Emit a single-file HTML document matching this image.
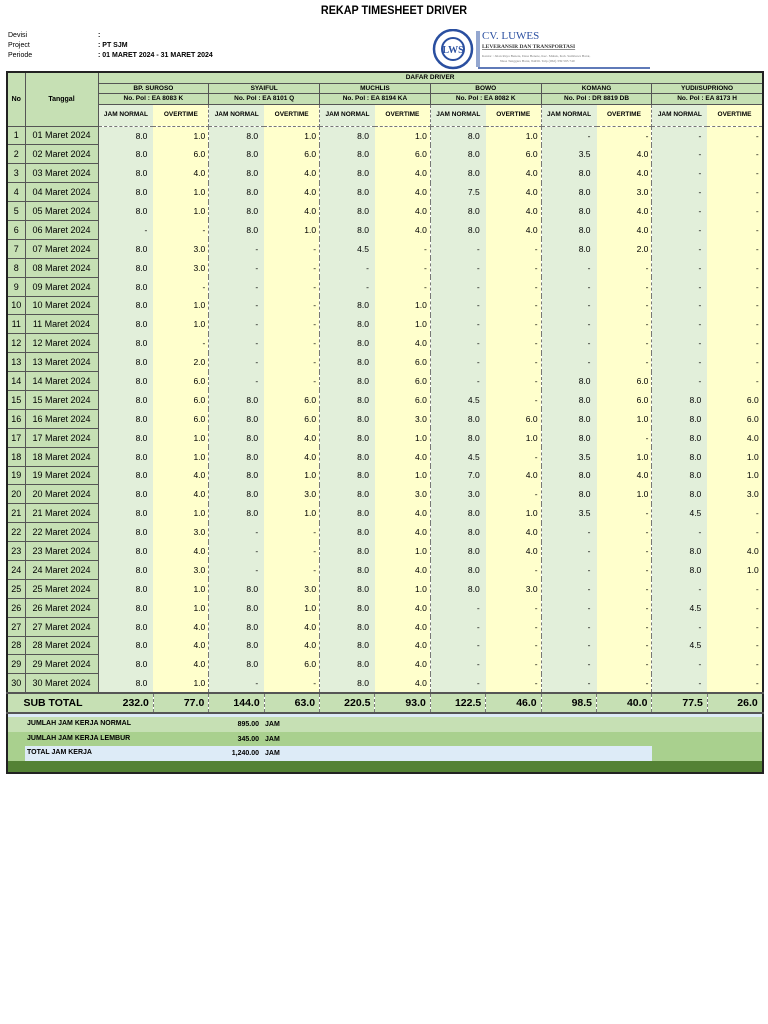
<!DOCTYPE html>
<html><head><meta charset="utf-8"><style>
body{margin:0;width:768px;height:1024px;background:#fff;font-family:"Liberation Sans",sans-serif;position:relative;overflow:hidden}
.t{position:absolute;left:10px;width:768px;text-align:center;top:3px;font-weight:bold;font-size:12px;transform:scaleX(.9)}
.info{position:absolute;left:8px;top:31px;font-size:7px;line-height:10px}
.info2{position:absolute;left:98px;top:31px;font-size:7px;line-height:10px;font-weight:bold}
table{position:absolute;left:6px;top:71px;border-collapse:collapse;table-layout:fixed;width:756px;border:2px solid #222}
td{padding:0;font-size:8.5px;white-space:nowrap;overflow:hidden;line-height:10px}
.h td{background:#c6e0b4;text-align:center;font-weight:bold;font-size:6.5px;border:1px solid #555;height:9.5px;line-height:9px}
.h2 td{height:21px;font-size:6.5px;font-weight:bold;text-align:center;border-bottom:1px dashed #777}
.n{background:#e2efda}.o{background:#ffffcc;border-right:1px dashed #777}
tbody.d td{height:17.9px;text-align:right}
tbody.d td.n{padding-right:6px}tbody.d td.o{padding-right:3px}
.a{background:#c6e0b4;text-align:center!important;border:1px solid #555;font-size:9px}
.s td{background:#c6e0b4;height:18px;font-weight:bold;font-size:10.5px;text-align:right;padding-right:4px;border-top:2px solid #555;border-bottom:2px solid #555}
.s td.c{border-right:1px dashed #777}
.sum td{font-size:7px;font-weight:bold;height:14.5px;vertical-align:middle}
</style></head><body>
<div class="t">REKAP TIMESHEET DRIVER</div>
<div class="info">Devisi<br>Project<br>Periode</div>
<div class="info2">:<br>: PT SJM<br>: 01 MARET 2024 - 31 MARET 2024</div>
<svg style="position:absolute;left:432px;top:29px" width="220" height="42">
<circle cx="21" cy="20" r="19" fill="none" stroke="#2a4fa0" stroke-width="2.5"/><circle cx="21" cy="20" r="11" fill="none" stroke="#2a4fa0" stroke-width="2"/>
<text x="21" y="24" font-size="10" font-weight="bold" fill="#2a4fa0" text-anchor="middle" font-family="Liberation Serif">LWS</text>
<line x1="45" y1="2" x2="45" y2="38" stroke="#2a4fa0"/><line x1="47" y1="2" x2="47" y2="38" stroke="#2a4fa0"/>
<text x="50" y="10" font-size="11" fill="#2a4fa0" font-family="Liberation Serif">CV. LUWES</text>
<text x="50" y="19" font-size="5.5" font-weight="bold" fill="#333" font-family="Liberation Serif" text-decoration="underline">LEVERANSIR DAN TRANSPORTASI</text>
<text x="50" y="28" font-size="3.5" fill="#777" font-family="Liberation Serif">Kantor : Jalan Raya Benete, Desa Benete, Kec. Maluk, Kab. Sumbawa Barat,</text>
<text x="68" y="33" font-size="3.5" fill="#777" font-family="Liberation Serif">Nusa Tenggara Barat, 84456. Telp (062) 339 595 740</text>
<line x1="46" y1="39" x2="218" y2="39" stroke="#2a4fa0" stroke-width="1.5"/></svg>
<table>
<colgroup><col style="width:18px"><col style="width:73px"><col span="12" style="width:55.4px"></colgroup>
<tr class="h"><td rowspan="4" style="font-size:7px">No</td><td rowspan="4" style="font-size:7px">Tanggal</td><td colspan="12">DAFAR DRIVER</td></tr>
<tr class="h"><td colspan="2">BP. SUROSO</td><td colspan="2">SYAIFUL</td><td colspan="2">MUCHLIS</td><td colspan="2">BOWO</td><td colspan="2">KOMANG</td><td colspan="2">YUDI/SUPRIONO</td></tr>
<tr class="h"><td colspan="2">No. Pol : EA 8083 K</td><td colspan="2">No. Pol : EA 8101 Q</td><td colspan="2">No. Pol : EA 8194 KA</td><td colspan="2">No. Pol : EA 8082 K</td><td colspan="2">No. Pol : DR 8819 DB</td><td colspan="2">No. Pol : EA 8173 H</td></tr>
<tr class="h2"><td class="n">JAM NORMAL</td><td class="o">OVERTIME</td><td class="n">JAM NORMAL</td><td class="o">OVERTIME</td><td class="n">JAM NORMAL</td><td class="o">OVERTIME</td><td class="n">JAM NORMAL</td><td class="o">OVERTIME</td><td class="n">JAM NORMAL</td><td class="o">OVERTIME</td><td class="n">JAM NORMAL</td><td class="o">OVERTIME</td></tr>
<tbody class="d">
<tr><td class="a">1</td><td class="a">01 Maret 2024</td><td class="n">8.0</td><td class="o">1.0</td><td class="n">8.0</td><td class="o">1.0</td><td class="n">8.0</td><td class="o">1.0</td><td class="n">8.0</td><td class="o">1.0</td><td class="n">-</td><td class="o">-</td><td class="n">-</td><td class="o">-</td></tr>
<tr><td class="a">2</td><td class="a">02 Maret 2024</td><td class="n">8.0</td><td class="o">6.0</td><td class="n">8.0</td><td class="o">6.0</td><td class="n">8.0</td><td class="o">6.0</td><td class="n">8.0</td><td class="o">6.0</td><td class="n">3.5</td><td class="o">4.0</td><td class="n">-</td><td class="o">-</td></tr>
<tr><td class="a">3</td><td class="a">03 Maret 2024</td><td class="n">8.0</td><td class="o">4.0</td><td class="n">8.0</td><td class="o">4.0</td><td class="n">8.0</td><td class="o">4.0</td><td class="n">8.0</td><td class="o">4.0</td><td class="n">8.0</td><td class="o">4.0</td><td class="n">-</td><td class="o">-</td></tr>
<tr><td class="a">4</td><td class="a">04 Maret 2024</td><td class="n">8.0</td><td class="o">1.0</td><td class="n">8.0</td><td class="o">4.0</td><td class="n">8.0</td><td class="o">4.0</td><td class="n">7.5</td><td class="o">4.0</td><td class="n">8.0</td><td class="o">3.0</td><td class="n">-</td><td class="o">-</td></tr>
<tr><td class="a">5</td><td class="a">05 Maret 2024</td><td class="n">8.0</td><td class="o">1.0</td><td class="n">8.0</td><td class="o">4.0</td><td class="n">8.0</td><td class="o">4.0</td><td class="n">8.0</td><td class="o">4.0</td><td class="n">8.0</td><td class="o">4.0</td><td class="n">-</td><td class="o">-</td></tr>
<tr><td class="a">6</td><td class="a">06 Maret 2024</td><td class="n">-</td><td class="o">-</td><td class="n">8.0</td><td class="o">1.0</td><td class="n">8.0</td><td class="o">4.0</td><td class="n">8.0</td><td class="o">4.0</td><td class="n">8.0</td><td class="o">4.0</td><td class="n">-</td><td class="o">-</td></tr>
<tr><td class="a">7</td><td class="a">07 Maret 2024</td><td class="n">8.0</td><td class="o">3.0</td><td class="n">-</td><td class="o">-</td><td class="n">4.5</td><td class="o">-</td><td class="n">-</td><td class="o">-</td><td class="n">8.0</td><td class="o">2.0</td><td class="n">-</td><td class="o">-</td></tr>
<tr><td class="a">8</td><td class="a">08 Maret 2024</td><td class="n">8.0</td><td class="o">3.0</td><td class="n">-</td><td class="o">-</td><td class="n">-</td><td class="o">-</td><td class="n">-</td><td class="o">-</td><td class="n">-</td><td class="o">-</td><td class="n">-</td><td class="o">-</td></tr>
<tr><td class="a">9</td><td class="a">09 Maret 2024</td><td class="n">8.0</td><td class="o">-</td><td class="n">-</td><td class="o">-</td><td class="n">-</td><td class="o">-</td><td class="n">-</td><td class="o">-</td><td class="n">-</td><td class="o">-</td><td class="n">-</td><td class="o">-</td></tr>
<tr><td class="a">10</td><td class="a">10 Maret 2024</td><td class="n">8.0</td><td class="o">1.0</td><td class="n">-</td><td class="o">-</td><td class="n">8.0</td><td class="o">1.0</td><td class="n">-</td><td class="o">-</td><td class="n">-</td><td class="o">-</td><td class="n">-</td><td class="o">-</td></tr>
<tr><td class="a">11</td><td class="a">11 Maret 2024</td><td class="n">8.0</td><td class="o">1.0</td><td class="n">-</td><td class="o">-</td><td class="n">8.0</td><td class="o">1.0</td><td class="n">-</td><td class="o">-</td><td class="n">-</td><td class="o">-</td><td class="n">-</td><td class="o">-</td></tr>
<tr><td class="a">12</td><td class="a">12 Maret 2024</td><td class="n">8.0</td><td class="o">-</td><td class="n">-</td><td class="o">-</td><td class="n">8.0</td><td class="o">4.0</td><td class="n">-</td><td class="o">-</td><td class="n">-</td><td class="o">-</td><td class="n">-</td><td class="o">-</td></tr>
<tr><td class="a">13</td><td class="a">13 Maret 2024</td><td class="n">8.0</td><td class="o">2.0</td><td class="n">-</td><td class="o">-</td><td class="n">8.0</td><td class="o">6.0</td><td class="n">-</td><td class="o">-</td><td class="n">-</td><td class="o">-</td><td class="n">-</td><td class="o">-</td></tr>
<tr><td class="a">14</td><td class="a">14 Maret 2024</td><td class="n">8.0</td><td class="o">6.0</td><td class="n">-</td><td class="o">-</td><td class="n">8.0</td><td class="o">6.0</td><td class="n">-</td><td class="o">-</td><td class="n">8.0</td><td class="o">6.0</td><td class="n">-</td><td class="o">-</td></tr>
<tr><td class="a">15</td><td class="a">15 Maret 2024</td><td class="n">8.0</td><td class="o">6.0</td><td class="n">8.0</td><td class="o">6.0</td><td class="n">8.0</td><td class="o">6.0</td><td class="n">4.5</td><td class="o">-</td><td class="n">8.0</td><td class="o">6.0</td><td class="n">8.0</td><td class="o">6.0</td></tr>
<tr><td class="a">16</td><td class="a">16 Maret 2024</td><td class="n">8.0</td><td class="o">6.0</td><td class="n">8.0</td><td class="o">6.0</td><td class="n">8.0</td><td class="o">3.0</td><td class="n">8.0</td><td class="o">6.0</td><td class="n">8.0</td><td class="o">1.0</td><td class="n">8.0</td><td class="o">6.0</td></tr>
<tr><td class="a">17</td><td class="a">17 Maret 2024</td><td class="n">8.0</td><td class="o">1.0</td><td class="n">8.0</td><td class="o">4.0</td><td class="n">8.0</td><td class="o">1.0</td><td class="n">8.0</td><td class="o">1.0</td><td class="n">8.0</td><td class="o">-</td><td class="n">8.0</td><td class="o">4.0</td></tr>
<tr><td class="a">18</td><td class="a">18 Maret 2024</td><td class="n">8.0</td><td class="o">1.0</td><td class="n">8.0</td><td class="o">4.0</td><td class="n">8.0</td><td class="o">4.0</td><td class="n">4.5</td><td class="o">-</td><td class="n">3.5</td><td class="o">1.0</td><td class="n">8.0</td><td class="o">1.0</td></tr>
<tr><td class="a">19</td><td class="a">19 Maret 2024</td><td class="n">8.0</td><td class="o">4.0</td><td class="n">8.0</td><td class="o">1.0</td><td class="n">8.0</td><td class="o">1.0</td><td class="n">7.0</td><td class="o">4.0</td><td class="n">8.0</td><td class="o">4.0</td><td class="n">8.0</td><td class="o">1.0</td></tr>
<tr><td class="a">20</td><td class="a">20 Maret 2024</td><td class="n">8.0</td><td class="o">4.0</td><td class="n">8.0</td><td class="o">3.0</td><td class="n">8.0</td><td class="o">3.0</td><td class="n">3.0</td><td class="o">-</td><td class="n">8.0</td><td class="o">1.0</td><td class="n">8.0</td><td class="o">3.0</td></tr>
<tr><td class="a">21</td><td class="a">21 Maret 2024</td><td class="n">8.0</td><td class="o">1.0</td><td class="n">8.0</td><td class="o">1.0</td><td class="n">8.0</td><td class="o">4.0</td><td class="n">8.0</td><td class="o">1.0</td><td class="n">3.5</td><td class="o">-</td><td class="n">4.5</td><td class="o">-</td></tr>
<tr><td class="a">22</td><td class="a">22 Maret 2024</td><td class="n">8.0</td><td class="o">3.0</td><td class="n">-</td><td class="o">-</td><td class="n">8.0</td><td class="o">4.0</td><td class="n">8.0</td><td class="o">4.0</td><td class="n">-</td><td class="o">-</td><td class="n">-</td><td class="o">-</td></tr>
<tr><td class="a">23</td><td class="a">23 Maret 2024</td><td class="n">8.0</td><td class="o">4.0</td><td class="n">-</td><td class="o">-</td><td class="n">8.0</td><td class="o">1.0</td><td class="n">8.0</td><td class="o">4.0</td><td class="n">-</td><td class="o">-</td><td class="n">8.0</td><td class="o">4.0</td></tr>
<tr><td class="a">24</td><td class="a">24 Maret 2024</td><td class="n">8.0</td><td class="o">3.0</td><td class="n">-</td><td class="o">-</td><td class="n">8.0</td><td class="o">4.0</td><td class="n">8.0</td><td class="o">-</td><td class="n">-</td><td class="o">-</td><td class="n">8.0</td><td class="o">1.0</td></tr>
<tr><td class="a">25</td><td class="a">25 Maret 2024</td><td class="n">8.0</td><td class="o">1.0</td><td class="n">8.0</td><td class="o">3.0</td><td class="n">8.0</td><td class="o">1.0</td><td class="n">8.0</td><td class="o">3.0</td><td class="n">-</td><td class="o">-</td><td class="n">-</td><td class="o">-</td></tr>
<tr><td class="a">26</td><td class="a">26 Maret 2024</td><td class="n">8.0</td><td class="o">1.0</td><td class="n">8.0</td><td class="o">1.0</td><td class="n">8.0</td><td class="o">4.0</td><td class="n">-</td><td class="o">-</td><td class="n">-</td><td class="o">-</td><td class="n">4.5</td><td class="o">-</td></tr>
<tr><td class="a">27</td><td class="a">27 Maret 2024</td><td class="n">8.0</td><td class="o">4.0</td><td class="n">8.0</td><td class="o">4.0</td><td class="n">8.0</td><td class="o">4.0</td><td class="n">-</td><td class="o">-</td><td class="n">-</td><td class="o">-</td><td class="n">-</td><td class="o">-</td></tr>
<tr><td class="a">28</td><td class="a">28 Maret 2024</td><td class="n">8.0</td><td class="o">4.0</td><td class="n">8.0</td><td class="o">4.0</td><td class="n">8.0</td><td class="o">4.0</td><td class="n">-</td><td class="o">-</td><td class="n">-</td><td class="o">-</td><td class="n">4.5</td><td class="o">-</td></tr>
<tr><td class="a">29</td><td class="a">29 Maret 2024</td><td class="n">8.0</td><td class="o">4.0</td><td class="n">8.0</td><td class="o">6.0</td><td class="n">8.0</td><td class="o">4.0</td><td class="n">-</td><td class="o">-</td><td class="n">-</td><td class="o">-</td><td class="n">-</td><td class="o">-</td></tr>
<tr><td class="a">30</td><td class="a">30 Maret 2024</td><td class="n">8.0</td><td class="o">1.0</td><td class="n">-</td><td class="o">-</td><td class="n">8.0</td><td class="o">4.0</td><td class="n">-</td><td class="o">-</td><td class="n">-</td><td class="o">-</td><td class="n">-</td><td class="o">-</td></tr>
</tbody>
<tr class="s"><td colspan="2" style="text-align:center;padding:0">SUB TOTAL</td><td class="c">232.0</td><td class="c">77.0</td><td class="c">144.0</td><td class="c">63.0</td><td class="c">220.5</td><td class="c">93.0</td><td class="c">122.5</td><td class="c">46.0</td><td class="c">98.5</td><td class="c">40.0</td><td class="c">77.5</td><td>26.0</td></tr>
<tr><td colspan="14" style="height:3px;background:#ddebf7"></td></tr>
<tr class="sum" style="background:#c6e0b4"><td></td><td colspan="5" style="padding-left:2px">JUMLAH JAM KERJA NORMAL</td><td colspan="8"></td></tr>
<tr class="sum" style="background:#a9d08e"><td></td><td colspan="5" style="padding-left:2px">JUMLAH JAM KERJA LEMBUR</td><td colspan="8"></td></tr>
<tr class="sum"><td style="background:#a9d08e"></td><td colspan="11" style="background:#ddebf7;padding-left:2px">TOTAL JAM KERJA</td><td colspan="2" style="background:#a9d08e"></td></tr>
<tr><td colspan="14" style="height:11px;background:#548235"></td></tr>
</table>
<div style="position:absolute;left:215px;top:718px;font-size:7px;font-weight:bold;line-height:14.5px;text-align:right;width:44px">895.00<br>345.00<br>1,240.00</div>
<div style="position:absolute;left:265px;top:718px;font-size:7px;font-weight:bold;line-height:14.5px">JAM<br>JAM<br>JAM</div>
</body></html>
